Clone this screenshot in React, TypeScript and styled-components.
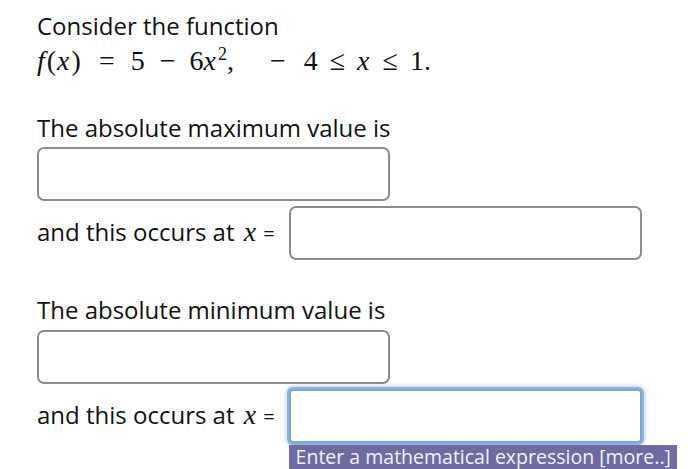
import React from 'react';
import styled, { createGlobalStyle } from 'styled-components';

const GlobalStyle = createGlobalStyle`
  html, body {
    margin: 0;
    padding: 0;
    background: #fff;
  }
  body {
    font-family: "Open Sans", "DejaVu Sans", sans-serif;
    color: #111;
  }
`;

const Page = styled.div`
  padding: 11px 0 0 37px;
  width: 700px;
  min-height: 469px;
  box-sizing: border-box;
`;

const Text = styled.p<{ $top?: number }>`
  margin: ${(p) => p.$top || 0}px 0 0;
  font-size: 24px;
  line-height: 30px;
`;

const MathLine = styled.div`
  margin-top: 5px;
  font-family: "Liberation Serif", "DejaVu Serif", serif;
  font-size: 28px;
  line-height: 30px;
  white-space: nowrap;
`;

const Var = styled.i<{ $l?: number; $r?: number }>`
  font-style: italic;
  margin-left: ${(p) => p.$l || 0}px;
  margin-right: ${(p) => p.$r || 0}px;
`;

const Op = styled.span<{ $l?: number; $r?: number }>`
  margin-left: ${(p) => p.$l || 0}px;
  margin-right: ${(p) => p.$r || 0}px;
`;

const Sup = styled.sup`
  font-size: 18px;
  vertical-align: 10px;
  line-height: 0;
  margin-left: 1px;
`;

const AnswerBox = styled.div<{ $top?: number; $focus?: boolean }>`
  margin-top: ${(p) => p.$top || 0}px;
  width: 353px;
  height: 54px;
  box-sizing: border-box;
  background: #fff;
  border: 2px solid ${(p) => (p.$focus ? '#7aa8d6' : '#8c8c8c')};
  border-radius: ${(p) => (p.$focus ? '4px' : '7px')};
  box-shadow: ${(p) => (p.$focus ? '0 0 0 2px #8cb4dc, 0 0 4px 3px rgba(120,170,215,0.5)' : 'none')};
`;

const Row = styled.div<{ $top?: number }>`
  display: flex;
  align-items: center;
  gap: 14px;
  margin-top: ${(p) => p.$top || 0}px;
`;

const Label = styled.span`
  font-size: 24px;
  line-height: 30px;
  white-space: nowrap;
`;

const MathX = styled.i`
  font-family: "Liberation Serif", "DejaVu Serif", serif;
  font-size: 28px;
  margin: 0 7px 0 3px;
`;

const Eq = styled.span`
  font-size: 20px;
`;

const Anchor = styled.div`
  position: relative;
`;

const Hint = styled.div`
  position: absolute;
  left: 0;
  top: 100%;
  margin-top: 2px;
  height: 24px;
  padding: 0 6px 0 7px;
  background: #6e6ba2;
  color: #f2f2f6;
  font-size: 19.5px;
  line-height: 24px;
  white-space: nowrap;
`;

const OccursAt = ({ top, focus }: { top: number; focus?: boolean }) => (
  <Row $top={top}>
    <Label>
      and this occurs at <MathX>x</MathX>
      <Eq>=</Eq>
    </Label>
    <Anchor>
      <AnswerBox $focus={focus} />
      {focus && <Hint>Enter a mathematical expression [more..]</Hint>}
    </Anchor>
  </Row>
);

const App: React.FC = () => (
  <>
    <GlobalStyle />
    <Page>
      <Text>Consider the function</Text>
      <MathLine>
        <Var $r={2}>f</Var>(<Var $l={1} $r={2}>x</Var>)
        <Op $l={18} $r={16}>=</Op>5
        <Op $l={15} $r={14}>−</Op>6<Var $r={1}>x</Var>
        <Sup>2</Sup>,
        <Op $l={36} $r={18}>−</Op>4
        <Op $l={12} $r={12}>≤</Op>
        <Var>x</Var>
        <Op $l={13} $r={12}>≤</Op>1.
      </MathLine>
      <Text $top={37}>The absolute maximum value is</Text>
      <AnswerBox $top={4} />
      <OccursAt top={5} />
      <Text $top={35}>The absolute minimum value is</Text>
      <AnswerBox $top={5} />
      <OccursAt top={5} focus />
    </Page>
  </>
);

export default App;
